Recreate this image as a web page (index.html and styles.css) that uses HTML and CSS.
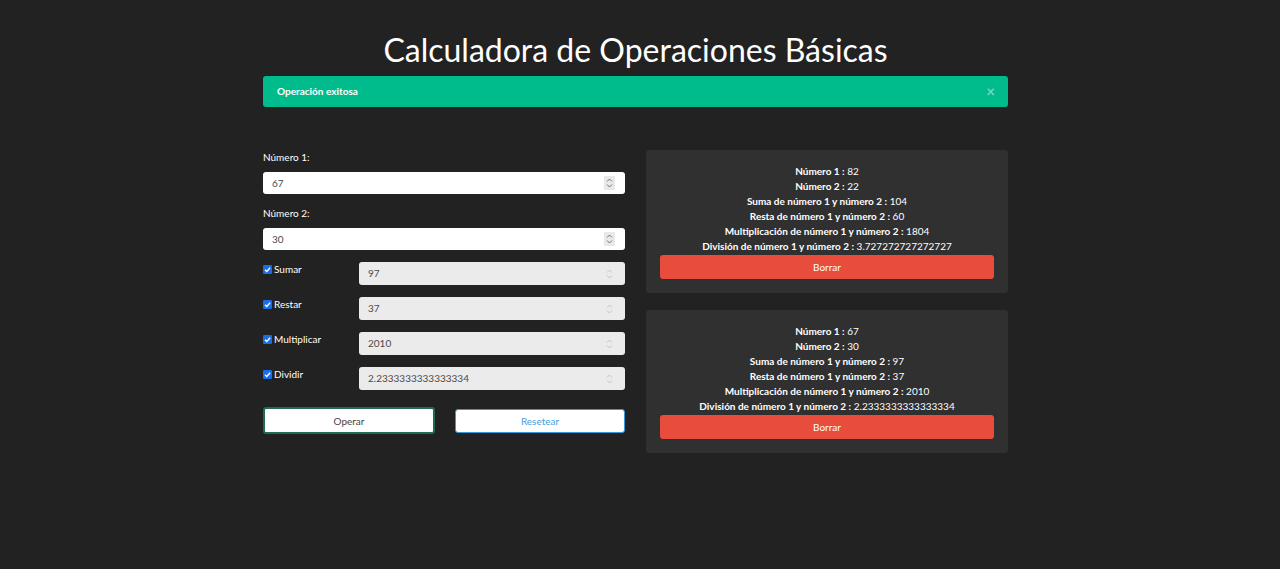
FILE: index.html
```html
<!DOCTYPE html>
<html lang="es">
<head>
<meta charset="utf-8">
<title>Calculadora de Operaciones Básicas</title>
<link rel="stylesheet" href="styles.css">
</head>
<body>
<div class="container">
  <h1 class="title">Calculadora de Operaciones Básicas</h1>
  <div class="alert">
    <span>Operación exitosa</span>
    <span class="close">&times;</span>
  </div>
  <div class="row">
    <form class="form">
      <label class="lbl">Número 1:</label>
      <div class="input"><span class="val">67</span><svg class="spin" viewBox="0 0 11 14"><path d="M3 5.5 L5.5 3 L8 5.5 M3 8.5 L5.5 11 L8 8.5" fill="none" stroke="#6f6f6f" stroke-width="1"/></svg></div>
      <label class="lbl">Número 2:</label>
      <div class="input"><span class="val">30</span><svg class="spin" viewBox="0 0 11 14"><path d="M3 5.5 L5.5 3 L8 5.5 M3 8.5 L5.5 11 L8 8.5" fill="none" stroke="#6f6f6f" stroke-width="1"/></svg></div>

      <div class="op">
        <label class="chk"><svg class="box" viewBox="0 0 10 10"><rect x="0" y="0" width="10" height="10" rx="1.5" fill="#1a6fe8"/><path d="M2.2 5.2 L4.2 7.2 L7.9 3" fill="none" stroke="#fff" stroke-width="1.5"/></svg>Sumar</label>
        <div class="input dis"><span class="val">97</span><svg class="spin" viewBox="0 0 11 14"><path d="M3 5.5 L5.5 3 L8 5.5 M3 8.5 L5.5 11 L8 8.5" fill="none" stroke="#c4c4c4" stroke-width="1"/></svg></div>
      </div>
      <div class="op">
        <label class="chk"><svg class="box" viewBox="0 0 10 10"><rect x="0" y="0" width="10" height="10" rx="1.5" fill="#1a6fe8"/><path d="M2.2 5.2 L4.2 7.2 L7.9 3" fill="none" stroke="#fff" stroke-width="1.5"/></svg>Restar</label>
        <div class="input dis"><span class="val">37</span><svg class="spin" viewBox="0 0 11 14"><path d="M3 5.5 L5.5 3 L8 5.5 M3 8.5 L5.5 11 L8 8.5" fill="none" stroke="#c4c4c4" stroke-width="1"/></svg></div>
      </div>
      <div class="op">
        <label class="chk"><svg class="box" viewBox="0 0 10 10"><rect x="0" y="0" width="10" height="10" rx="1.5" fill="#1a6fe8"/><path d="M2.2 5.2 L4.2 7.2 L7.9 3" fill="none" stroke="#fff" stroke-width="1.5"/></svg>Multiplicar</label>
        <div class="input dis"><span class="val">2010</span><svg class="spin" viewBox="0 0 11 14"><path d="M3 5.5 L5.5 3 L8 5.5 M3 8.5 L5.5 11 L8 8.5" fill="none" stroke="#c4c4c4" stroke-width="1"/></svg></div>
      </div>
      <div class="op">
        <label class="chk"><svg class="box" viewBox="0 0 10 10"><rect x="0" y="0" width="10" height="10" rx="1.5" fill="#1a6fe8"/><path d="M2.2 5.2 L4.2 7.2 L7.9 3" fill="none" stroke="#fff" stroke-width="1.5"/></svg>Dividir</label>
        <div class="input dis"><span class="val">2.2333333333333334</span><svg class="spin" viewBox="0 0 11 14"><path d="M3 5.5 L5.5 3 L8 5.5 M3 8.5 L5.5 11 L8 8.5" fill="none" stroke="#c4c4c4" stroke-width="1"/></svg></div>
      </div>

      <div class="btns">
        <button type="button" class="btn operar">Operar</button>
        <button type="button" class="btn resetear">Resetear</button>
      </div>
    </form>

    <div class="results">
      <div class="card">
        <p><b>Número 1 :</b> 82</p>
        <p><b>Número 2 :</b> 22</p>
        <p><b>Suma de número 1 y número 2 :</b> 104</p>
        <p><b>Resta de número 1 y número 2 :</b> 60</p>
        <p><b>Multiplicación de número 1 y número 2 :</b> 1804</p>
        <p><b>División de número 1 y número 2 :</b> 3.727272727272727</p>
        <button type="button" class="borrar">Borrar</button>
      </div>
      <div class="card">
        <p><b>Número 1 :</b> 67</p>
        <p><b>Número 2 :</b> 30</p>
        <p><b>Suma de número 1 y número 2 :</b> 97</p>
        <p><b>Resta de número 1 y número 2 :</b> 37</p>
        <p><b>Multiplicación de número 1 y número 2 :</b> 2010</p>
        <p><b>División de número 1 y número 2 :</b> 2.2333333333333334</p>
        <button type="button" class="borrar">Borrar</button>
      </div>
    </div>
  </div>
</div>
</body>
</html>
```
FILE: styles.css
```css
* { box-sizing: border-box; }
html, body { margin: 0; padding: 0; }
body {
  background: #222222;
  color: #ffffff;
  font-family: Lato, "Open Sans", "Liberation Sans", sans-serif;
  font-size: 10px;
  line-height: 15px;
  padding-right: 9px;
}
.container {
  width: 745px;
  margin: 0 auto;
  padding-top: 31px;
}
.title {
  margin: 0;
  font-size: 32px;
  line-height: 38px;
  font-weight: 400;
  text-align: center;
  color: #fff;
}
.alert {
  margin-top: 7px;
  height: 31px;
  background: #00bc8c;
  border-radius: 3px;
  display: flex;
  align-items: center;
  justify-content: space-between;
  padding: 0 14px;
  font-weight: 700;
  font-size: 10px;
}
.close {
  color: rgba(255,255,255,0.45);
  font-size: 15px;
  font-weight: 700;
  margin-right: -1px;
}
.row {
  margin-top: 43px;
  display: grid;
  grid-template-columns: 362px 362px;
  column-gap: 21px;
  align-items: start;
}
.form {
  display: flex;
  flex-direction: column;
}
.lbl {
  display: block;
  line-height: 15px;
  margin-bottom: 7px;
}
.input {
  height: 22px;
  background: #ffffff;
  border-radius: 3px;
  display: flex;
  align-items: center;
  justify-content: space-between;
  padding: 0 10px 0 9px;
  color: #4a4a4a;
  margin-bottom: 12px;
}
.input .val { line-height: 15px; }
.spin {
  width: 11px;
  height: 14px;
  background: #e9e9e9;
  display: block;
}
.op {
  display: grid;
  grid-template-columns: 96px 1fr;
  align-items: start;
  margin-bottom: 12px;
}
.op .input { margin: 0; height: 23px; }
.input.dis { background: #ebebeb; }
.input.dis .spin { background: transparent; }
.chk {
  display: flex;
  align-items: center;
  gap: 2px;
  line-height: 15px;
}
.box { width: 9px; height: 9px; display: block; }
.btns {
  display: grid;
  grid-template-columns: 172px 170px;
  column-gap: 20px;
  align-items: center;
  margin-top: 5px;
}
.btn {
  font-family: inherit;
  font-size: 10px;
  background: #ffffff;
  border-radius: 3px;
  padding: 0;
  cursor: pointer;
}
.operar {
  height: 27px;
  border: 2px solid #1e6b58;
  color: #444444;
}
.resetear {
  height: 24px;
  border: 1px solid #3498db;
  color: #3f9fe0;
}
.results {
  display: flex;
  flex-direction: column;
  gap: 17px;
}
.card {
  background: #303030;
  border-radius: 3px;
  padding: 14px;
  text-align: center;
}
.card p {
  margin: 0;
  line-height: 15px;
}
.card b { font-weight: 700; }
.borrar {
  display: block;
  width: 100%;
  height: 24px;
  margin-top: 1px;
  background: #e74c3c;
  color: #ffffff;
  border: none;
  border-radius: 3px;
  font-family: inherit;
  font-size: 10px;
}
```
